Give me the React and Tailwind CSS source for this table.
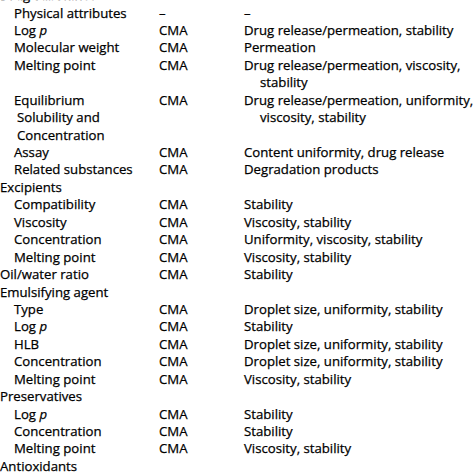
import React from "react";

const P = () => <i>p</i>;

const rows = [
  { a: ["Drug substance"], lvl: 0 },
  { a: ["Physical attributes"], b: "–", c: ["–"] },
  { a: [<>Log <P /></>], b: "CMA", c: ["Drug release/permeation, stability"] },
  { a: ["Molecular weight"], b: "CMA", c: ["Permeation"] },
  { a: ["Melting point"], b: "CMA", c: ["Drug release/permeation, viscosity,", "stability"] },
  { a: ["Equilibrium", "Solubility and", "Concentration"], b: "CMA", c: ["Drug release/permeation, uniformity,", "viscosity, stability"] },
  { a: ["Assay"], b: "CMA", c: ["Content uniformity, drug release"] },
  { a: ["Related substances"], b: "CMA", c: ["Degradation products"] },
  { a: ["Excipients"], lvl: 0 },
  { a: ["Compatibility"], b: "CMA", c: ["Stability"] },
  { a: ["Viscosity"], b: "CMA", c: ["Viscosity, stability"] },
  { a: ["Concentration"], b: "CMA", c: ["Uniformity, viscosity, stability"] },
  { a: ["Melting point"], b: "CMA", c: ["Viscosity, stability"] },
  { a: ["Oil/water ratio"], lvl: 0, b: "CMA", c: ["Stability"] },
  { a: ["Emulsifying agent"], lvl: 0 },
  { a: ["Type"], b: "CMA", c: ["Droplet size, uniformity, stability"] },
  { a: [<>Log <P /></>], b: "CMA", c: ["Stability"] },
  { a: ["HLB"], b: "CMA", c: ["Droplet size, uniformity, stability"] },
  { a: ["Concentration"], b: "CMA", c: ["Droplet size, uniformity, stability"] },
  { a: ["Melting point"], b: "CMA", c: ["Viscosity, stability"] },
  { a: ["Preservatives"], lvl: 0 },
  { a: [<>Log <P /></>], b: "CMA", c: ["Stability"] },
  { a: ["Concentration"], b: "CMA", c: ["Stability"] },
  { a: ["Melting point"], b: "CMA", c: ["Viscosity, stability"] },
  { a: ["Antioxidants"], lvl: 0 },
];

export default function App() {
  return (
    <div
      className="w-[474px] h-[474px] overflow-hidden bg-white text-black text-[13.2px] leading-[17.44px] [-webkit-text-stroke:0.25px_black]"
      style={{ fontFamily: '"Open Sans", sans-serif' }}
    >
      <div className="-mt-[12.9px] flex flex-col">
        {rows.map((r, i) => (
          <div key={i} className="grid grid-cols-[159px_85px_1fr] whitespace-nowrap">
            <div className={r.lvl === 0 ? "pl-0" : "pl-[14px]"}>
              {r.a.map((t, j) => (
                <div key={j} className={j > 0 ? "pl-[3px]" : ""}>{t}</div>
              ))}
            </div>
            <div>{r.b || ""}</div>
            <div>
              {(r.c || []).map((t, j) => (
                <div key={j} className={j > 0 ? "pl-[16px]" : ""}>{t}</div>
              ))}
            </div>
          </div>
        ))}
      </div>
    </div>
  );
}
